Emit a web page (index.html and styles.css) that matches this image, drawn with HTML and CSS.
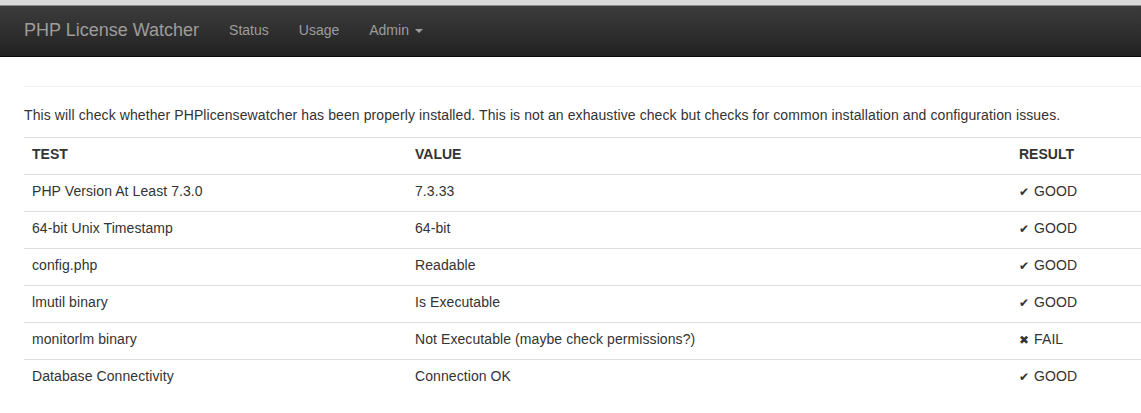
FILE: index.html
```html
<!DOCTYPE html>
<html lang="en">
<head>
<meta charset="utf-8">
<title>PHP License Watcher</title>
<link rel="stylesheet" href="styles.css">
</head>
<body>
<div class="topstrip"></div>
<nav class="navbar">
  <a class="brand" href="#">PHP License Watcher</a>
  <ul class="nav">
    <li><a href="#">Status</a></li>
    <li><a href="#">Usage</a></li>
    <li><a href="#">Admin <span class="caret"></span></a></li>
  </ul>
</nav>
<main class="content">
  <hr class="rule">
  <p class="intro">This will check whether PHPlicensewatcher has been properly installed. This is not an exhaustive check but checks for common installation and configuration issues.</p>
  <table class="checks">
    <colgroup>
      <col class="c-test">
      <col class="c-value">
      <col class="c-result">
    </colgroup>
    <tr><th>TEST</th><th>VALUE</th><th>RESULT</th></tr>
    <tr><td>PHP Version At Least 7.3.0</td><td>7.3.33</td><td><span class="mark">✔</span> GOOD</td></tr>
    <tr><td>64-bit Unix Timestamp</td><td>64-bit</td><td><span class="mark">✔</span> GOOD</td></tr>
    <tr><td>config.php</td><td>Readable</td><td><span class="mark">✔</span> GOOD</td></tr>
    <tr><td>lmutil binary</td><td>Is Executable</td><td><span class="mark">✔</span> GOOD</td></tr>
    <tr><td>monitorlm binary</td><td>Not Executable (maybe check permissions?)</td><td><span class="mark">✖</span> FAIL</td></tr>
    <tr><td>Database Connectivity</td><td>Connection OK</td><td><span class="mark">✔</span> GOOD</td></tr>
  </table>
</main>
</body>
</html>
```

FILE: styles.css
```css
html, body {
  margin: 0;
  padding: 0;
  background: #fff;
  overflow-x: hidden;
}
body {
  font-family: "Liberation Sans", Arial, Helvetica, sans-serif;
  font-size: 14px;
  line-height: 20px;
  color: #333;
}
.topstrip {
  height: 5px;
  background: #dadada;
  border-bottom: 1px solid #8c8c8c;
}
.navbar {
  display: flex;
  align-items: center;
  height: 50px;
  padding-left: 9px;
  background: linear-gradient(to bottom, #3c3c3c 0%, #222 100%);
  border-bottom: 1px solid #080808;
}
.brand {
  padding: 14px 15px 16px 15px;
  font-size: 18px;
  line-height: 20px;
  color: #9d9d9d;
  text-decoration: none;
}
.nav {
  display: flex;
  list-style: none;
  margin: 0;
  padding: 0;
}
.nav a {
  display: block;
  padding: 14px 15px 16px 15px;
  color: #9d9d9d;
  text-decoration: none;
  line-height: 20px;
}
.caret {
  display: inline-block;
  width: 0;
  height: 0;
  margin-left: 2px;
  vertical-align: middle;
  border-top: 4px solid #9d9d9d;
  border-left: 4px solid transparent;
  border-right: 4px solid transparent;
}
.content {
  padding-left: 24px;
}
.rule {
  margin: 29px 0 0 0;
  border: 0;
  border-top: 1px solid #eee;
  height: 0;
}
.intro {
  margin: 18px 0 12px 0;
  letter-spacing: 0.1px;
}
.checks {
  width: 1117px;
  border-collapse: collapse;
  table-layout: fixed;
}
.c-test { width: 383px; }
.c-value { width: 604px; }
.c-result { width: 130px; }
.checks th, .checks td {
  text-align: left;
  padding: 6px 8px 10px 8px;
  height: 20px;
  line-height: 20px;
  border-top: 1px solid #ddd;
  white-space: nowrap;
  letter-spacing: 0.08px;
}
.checks th {
  font-weight: bold;
  letter-spacing: 0;
}
.mark {
  font-family: "DejaVu Sans", sans-serif;
  font-size: 12px;
  line-height: 1;
  vertical-align: 0;
  margin-right: 1px;
}
```
